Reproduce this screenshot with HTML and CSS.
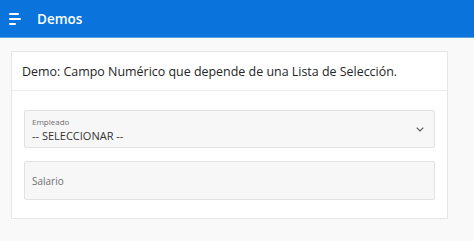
FILE: index.html
```html
<!DOCTYPE html>
<html lang="es">
<head>
  <meta charset="UTF-8" />
  <meta name="viewport" content="width=device-width, initial-scale=1.0"/>
  <title>Demos</title>
  <link rel="stylesheet" href="styles.css">
</head>
<body>

<div class="header">
  <svg class="menu-icon" width="14" height="12" viewBox="0 0 14 12">
    <rect x="0" y="0" width="10" height="2" rx="1" fill="#fff"/>
    <rect x="0" y="5" width="12" height="2" rx="1" fill="#fff"/>
    <rect x="0" y="10" width="7" height="2" rx="1" fill="#fff"/>
  </svg>
  <h1>Demos</h1>
</div>

<div class="main">
  <div class="card">
    <div class="card-title">Demo: Campo Numérico que depende de una Lista de Selección.</div>

    <div class="card-body">
      <div class="field select-field">
        <div class="field-text">
          <label>Empleado</label>
          <div class="value">-- SELECCIONAR --</div>
        </div>
        <svg class="chevron" width="8" height="5" viewBox="0 0 8 5">
          <path d="M0.7 0.7 L4 4 L7.3 0.7" fill="none" stroke="#555" stroke-width="1.1"/>
        </svg>
      </div>

      <div class="field input-field">
        <span class="placeholder">Salario</span>
      </div>
    </div>
  </div>
</div>

</body>
</html>
```

FILE: styles.css
```css
body {
  font-family: 'Open Sans', 'Noto Sans', sans-serif;
  background-color: #f9f9f9;
  color: #262626;
  margin: 0;
}

.header {
  background-color: #0a74dc;
  height: 37px;
  border-bottom: 1px solid #5aa3ea;
  display: flex;
  align-items: center;
  padding-left: 9px;
}

.menu-icon {
  margin-top: 1px;
}

.header h1 {
  margin: 0 0 0 14px;
  font-size: 13.5px;
  font-weight: 600;
  color: #fff;
}

.main {
  padding: 13px 26px 0 11px;
}

.card {
  background-color: #fff;
  border: 1px solid #e6e6e6;
}

.card-title {
  height: 38px;
  display: flex;
  align-items: center;
  padding-left: 10px;
  font-size: 12.45px;
  color: #262626;
  border-bottom: 1px solid #ececec;
}

.card-body {
  padding: 19px 12px 18px;
  display: flex;
  flex-direction: column;
  gap: 13px;
}

.field {
  background-color: #f7f7f7;
  border: 1px solid #e2e2e2;
  border-radius: 2px;
  display: flex;
  align-items: center;
  padding: 0 10px 0 7px;
}

.select-field {
  height: 36px;
  justify-content: space-between;
}

.field-text {
  padding-top: 1px;
}

.field-text label {
  display: block;
  font-size: 8px;
  color: #6f6f6f;
  line-height: 11px;
  margin-bottom: 1px;
}

.field-text .value {
  font-size: 11px;
  color: #333;
  line-height: 15px;
}

.input-field {
  height: 37px;
}

.placeholder {
  font-size: 10px;
  color: #6f6f6f;
}
```
